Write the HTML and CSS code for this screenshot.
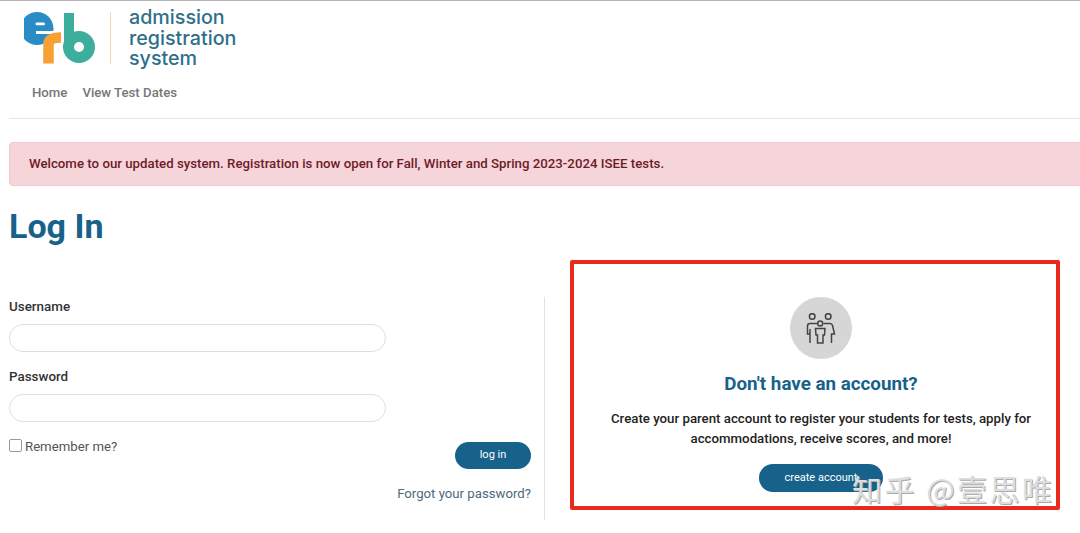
FILE: index.html
```html
<!DOCTYPE html>
<html>
<head>
    <link rel="stylesheet" href="styles.css">
</head>
<body>
    <div class="page">
        <header class="site-header">
            <div class="logo">
                <svg class="logo-mark" width="72" height="56" viewBox="24 12 72 56">
                    <circle cx="37" cy="28.500" r="16.500" fill="#2a8cc4"/>
                    <rect x="35.500" y="22.500" width="9.500" height="2.800" rx="1.400" fill="#fff"/>
                    <rect x="36" y="31" width="20" height="3" fill="#fff"/>
                    <path d="M48.500 63.500 V44 Q48.500 37.500 61 37.500" fill="none" stroke="#f7a033" stroke-width="10.500"/>
                    <path d="M69 13 V47" fill="none" stroke="#3dae9c" stroke-width="10"/>
                    <circle cx="79" cy="47" r="10.500" fill="none" stroke="#3dae9c" stroke-width="11"/>
                </svg>
                <div class="logo-rule"></div>
                <div class="logo-text">
                    <span>admission</span>
                    <span>registration</span>
                    <span>system</span>
                </div>
            </div>
            <nav class="nav">
                <a>Home</a>
                <a>View Test Dates</a>
            </nav>
        </header>

        <div class="alert">Welcome to our updated system. Registration is now open for Fall, Winter and Spring 2023-2024 ISEE tests.</div>

        <h1>Log In</h1>

        <div class="columns">
            <div class="login">
                <label class="field-label">Username</label>
                <div class="input"></div>
                <label class="field-label">Password</label>
                <div class="input"></div>
                <div class="login-foot">
                    <div class="remember">
                        <span class="checkbox"></span>
                        <span>Remember me?</span>
                    </div>
                    <div class="actions">
                        <button class="btn btn-login">log in</button>
                        <a class="forgot">Forgot your password?</a>
                    </div>
                </div>
            </div>
            <div class="signup">
                <div class="signup-icon">
                    <svg width="30" height="31" viewBox="0 0 30 31" fill="none" stroke="#444" stroke-width="1.500">
                        <circle cx="6.200" cy="3.500" r="2.800"/>
                        <circle cx="22.200" cy="3.500" r="2.800"/>
                        <circle cx="14.200" cy="10.500" r="2.500"/>
                        <path d="M11 10.500 H4 Q1.500 10.500 1.500 13 V21 H4"/>
                        <path d="M4 16 V30"/>
                        <path d="M17.500 10.500 H24 Q26 10.500 26.500 12.500 L28.500 21 H25.500 V30"/>
                        <path d="M9.500 15.500 H19 L18.500 22 H17 V30 H11.500 V22 H10 Z"/>
                    </svg>
                </div>
                <h2>Don't have an account?</h2>
                <p>Create your parent account to register your students for tests, apply for accommodations, receive scores, and more!</p>
                <button class="btn btn-create">create account</button>
            </div>
        </div>
    </div>
    <div class="watermark">知乎 @壹思唯</div>
</body>
</html>
```

FILE: styles.css
```css
html, body {
    margin: 0;
    height: 533px;
    overflow: hidden;
    background: #fff;
}
body {
    font-family: Roboto, "Liberation Sans", sans-serif;
    color: #333;
    position: relative;
    border-top: 1px solid #b5b5b5;
    box-sizing: border-box;
}
.page {
    padding-left: 9px;
    width: 1120px;
}
.site-header {
    height: 117px;
    border-bottom: 1px solid #e6e6e6;
}
.logo {
    display: flex;
    align-items: flex-start;
    padding: 6px 0 0 15px;
    height: 64px;
}
.logo-mark {
    flex: none;
    margin-top: 5px;
}
.logo-rule {
    width: 1px;
    height: 52px;
    margin: 5px 18px 0 14px;
    background: #f6d9ae;
}
.logo-text {
    display: flex;
    flex-direction: column;
    font-family: Inter, "Noto Sans", sans-serif;
    font-size: 19.700px;
    font-weight: 500;
    line-height: 20.500px;
    color: #2e6f8a;
}
.nav {
    display: flex;
    gap: 15px;
    padding: 15px 0 0 23px;
    font-size: 13.200px;
    font-weight: 500;
    line-height: 14px;
    color: #777;
}
.alert {
    margin-top: 23px;
    height: 44px;
    box-sizing: border-box;
    padding: 13px 19px;
    background: #f5d5d9;
    border: 1px solid #f0c8ce;
    border-radius: 4px;
    font-size: 13.250px;
    font-weight: 500;
    line-height: 15px;
    color: #6f1a2a;
}
h1 {
    margin: 20px 0 0;
    font-size: 34px;
    font-weight: 700;
    line-height: 40px;
    color: #17628a;
}
.columns {
    display: flex;
    align-items: flex-start;
    margin-top: 31px;
}
.login {
    width: 522px;
    height: 223px;
    margin-top: 20px;
    padding-right: 13px;
    border-right: 1px solid #e3e3e3;
}
.field-label {
    display: block;
    font-size: 13.400px;
    font-weight: 500;
    line-height: 20px;
    color: #333;
}
.input {
    width: 375px;
    height: 26px;
    margin: 7px 0 15px;
    border: 1px solid #dfdfdf;
    border-radius: 14px;
    background: #fff;
}
.login-foot {
    display: flex;
    justify-content: space-between;
    margin-top: -1px;
}
.remember {
    display: flex;
    align-items: center;
    gap: 3px;
    height: 20px;
    font-size: 13.200px;
    color: #555;
}
.checkbox {
    width: 11px;
    height: 11px;
    margin-bottom: 2px;
    border: 1px solid #999;
    border-radius: 2px;
}
.actions {
    display: flex;
    flex-direction: column;
    align-items: flex-end;
    gap: 17px;
    margin-top: 6px;
}
.btn {
    border: 0;
    border-radius: 14px;
    background: #17628a;
    color: #fff;
    font-family: Roboto, "Liberation Sans", sans-serif;
    font-size: 11px;
    padding: 0 0 2px;
}
.btn-login {
    width: 76px;
    height: 27px;
}
.forgot {
    font-size: 13.200px;
    line-height: 16px;
    color: #4d6a80;
}
.signup {
    width: 470px;
    height: 242px;
    margin: -17px 0 0 25px;
    padding-left: 12px;
    border: 4px solid #e8291c;
    border-radius: 2px;
    display: flex;
    flex-direction: column;
    align-items: center;
    text-align: center;
}
.signup-icon {
    display: flex;
    align-items: center;
    justify-content: center;
    width: 62px;
    height: 62px;
    margin-top: 33px;
    border-radius: 50%;
    background: #d6d6d6;
}
h2 {
    margin: 14px 0 0;
    font-size: 18.800px;
    font-weight: 700;
    line-height: 22px;
    color: #17628a;
}
.signup p {
    width: 440px;
    margin: 14px 0 0;
    font-size: 13.250px;
    font-weight: 500;
    line-height: 20px;
    color: #222;
}
.btn-create {
    width: 124px;
    height: 28px;
    margin-top: 15px;
}
.watermark {
    position: absolute;
    left: 852px;
    top: 470px;
    font-family: "Noto Sans CJK SC", sans-serif;
    font-size: 30px;
    line-height: 34px;
    letter-spacing: 2.500px;
    white-space: nowrap;
    color: #dedede;
    text-shadow: 1px 1px 0 #aaa;
}
```
